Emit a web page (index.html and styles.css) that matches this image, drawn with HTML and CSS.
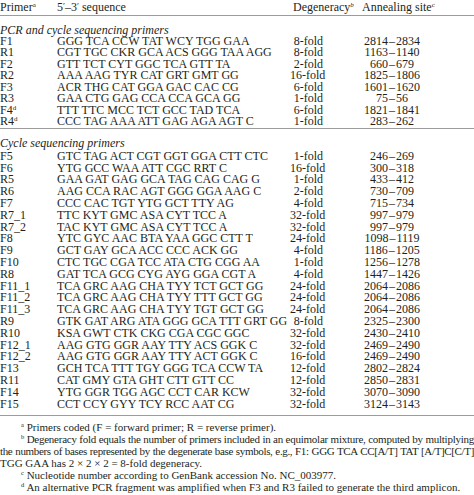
FILE: index.html
```html
<!DOCTYPE html>
<html>
<head>
<meta charset="utf-8">
<link rel="stylesheet" href="styles.css">
</head>
<body>
<div class="table">
  <div class="row head">
    <div>Primer<sup>a</sup></div>
    <div>5<sup class="pr">′</sup>–3<sup class="pr">′</sup> sequence</div>
    <div class="hdeg">Degeneracy<sup><i>b</i></sup></div>
    <div class="hann">Annealing site<sup>c</sup></div>
  </div>

  <div class="section s1">
    <div class="label">PCR and cycle sequencing primers</div>
    <div class="row"><div>F1</div><div>GGG TCA CCW TAT WCY TGG GAA</div><div class="deg">8-fold</div><div class="ann">2814 – 2834</div></div>
    <div class="row"><div>R1</div><div>CGT TGC CKR GCA ACS GGG TAA AGG</div><div class="deg">8-fold</div><div class="ann">1163 – 1140</div></div>
    <div class="row"><div>F2</div><div>GTT TCT CYT GGC TCA GTT TA</div><div class="deg">2-fold</div><div class="ann">660 – 679</div></div>
    <div class="row"><div>R2</div><div>AAA AAG TYR CAT GRT GMT GG</div><div class="deg">16-fold</div><div class="ann">1825 – 1806</div></div>
    <div class="row"><div>F3</div><div>ACR THG CAT GGA GAC CAC CG</div><div class="deg">6-fold</div><div class="ann">1601 – 1620</div></div>
    <div class="row"><div>R3</div><div>GAA CTG GAG CCA CCA GCA GG</div><div class="deg">1-fold</div><div class="ann">75 – 56</div></div>
    <div class="row"><div>F4<sup>d</sup></div><div>TTT TTC MCC TCT GCC TAD TCA</div><div class="deg">6-fold</div><div class="ann">1821 – 1841</div></div>
    <div class="row"><div>R4<sup>d</sup></div><div>CCC TAG AAA ATT GAG AGA AGT C</div><div class="deg">1-fold</div><div class="ann">283 – 262</div></div>
  </div>

  <div class="section s2">
    <div class="label">Cycle sequencing primers</div>
    <div class="row"><div>F5</div><div>GTC TAG ACT CGT GGT GGA CTT CTC</div><div class="deg">1-fold</div><div class="ann">246 – 269</div></div>
    <div class="row"><div>F6</div><div>YTG GCC WAA ATT CGC RRT C</div><div class="deg">16-fold</div><div class="ann">300 – 318</div></div>
    <div class="row"><div>R5</div><div>GAA GAT GAG GCA TAG CAG CAG G</div><div class="deg">1-fold</div><div class="ann">433 – 412</div></div>
    <div class="row"><div>R6</div><div>AAG CCA RAC AGT GGG GGA AAG C</div><div class="deg">2-fold</div><div class="ann">730 – 709</div></div>
    <div class="row"><div>F7</div><div>CCC CAC TGT YTG GCT TTY AG</div><div class="deg">4-fold</div><div class="ann">715 – 734</div></div>
    <div class="row"><div>R7_1</div><div>TTC KYT GMC ASA CYT TCC A</div><div class="deg">32-fold</div><div class="ann">997 – 979</div></div>
    <div class="row"><div>R7_2</div><div>TAC KYT GMC ASA CYT TCC A</div><div class="deg">32-fold</div><div class="ann">997 – 979</div></div>
    <div class="row"><div>F8</div><div>YTC GYC AAC BTA YAA GGC CTT T</div><div class="deg">24-fold</div><div class="ann">1098 – 1119</div></div>
    <div class="row"><div>F9</div><div>GCT GAY GCA ACC CCC ACK GG</div><div class="deg">4-fold</div><div class="ann">1186 – 1205</div></div>
    <div class="row"><div>F10</div><div>CTC TGC CGA TCC ATA CTG CGG AA</div><div class="deg">1-fold</div><div class="ann">1256 – 1278</div></div>
    <div class="row"><div>R8</div><div>GAT TCA GCG CYG AYG GGA CGT A</div><div class="deg">4-fold</div><div class="ann">1447 – 1426</div></div>
    <div class="row"><div>F11_1</div><div>TCA GRC AAG CHA TYY TCT GCT GG</div><div class="deg">24-fold</div><div class="ann">2064 – 2086</div></div>
    <div class="row"><div>F11_2</div><div>TCA GRC AAG CHA TYY TTT GCT GG</div><div class="deg">24-fold</div><div class="ann">2064 – 2086</div></div>
    <div class="row"><div>F11_3</div><div>TCA GRC AAG CHA TYY TGT GCT GG</div><div class="deg">24-fold</div><div class="ann">2064 – 2086</div></div>
    <div class="row"><div>R9</div><div>GTK GAT ARG ATA GGG GCA TTT GRT GG</div><div class="deg">8-fold</div><div class="ann">2325 – 2300</div></div>
    <div class="row"><div>R10</div><div>KSA GWT CTK CKG CGA CGC GGC</div><div class="deg">32-fold</div><div class="ann">2430 – 2410</div></div>
    <div class="row"><div>F12_1</div><div>AAG GTG GGR AAY TTY ACS GGK C</div><div class="deg">32-fold</div><div class="ann">2469 – 2490</div></div>
    <div class="row"><div>F12_2</div><div>AAG GTG GGR AAY TTY ACT GGK C</div><div class="deg">16-fold</div><div class="ann">2469 – 2490</div></div>
    <div class="row"><div>F13</div><div>GCH TCA TTT TGY GGG TCA CCW TA</div><div class="deg">12-fold</div><div class="ann">2802 – 2824</div></div>
    <div class="row"><div>R11</div><div>CAT GMY GTA GHT CTT GTT CC</div><div class="deg">12-fold</div><div class="ann">2850 – 2831</div></div>
    <div class="row"><div>F14</div><div>YTG GGR TGG AGC CCT CAR KCW</div><div class="deg">32-fold</div><div class="ann">3070 – 3090</div></div>
    <div class="row"><div>F15</div><div>CCT CCY GYY TCY RCC AAT CG</div><div class="deg">32-fold</div><div class="ann">3124 – 3143</div></div>
  </div>
</div>

<div class="notes">
  <p class="note"><sup>a</sup> Primers coded (F = forward primer; R = reverse primer).</p>
  <p class="note"><span class="full"><sup>b</sup> Degeneracy fold equals the number of primers included in an equimolar mixture, computed by multiplying</span><span class="full cont tight">the numbers of bases represented by the degenerate base symbols, e.g., F1: GGG TCA CC[A/T] TAT [A/T]C[C/T]</span><span class="cont">TGG GAA has 2 × 2 × 2 = 8-fold degeneracy.</span></p>
  <p class="note"><sup>c</sup> Nucleotide number according to GenBank accession No. NC_003977.</p>
  <p class="note"><sup>d</sup> An alternative PCR fragment was amplified when F3 and R3 failed to generate the third amplicon.</p>
</div>
</body>
</html>
```

FILE: styles.css
```css
html, body {
  margin: 0;
  padding: 0;
  background: #ffffff;
}

body {
  font-family: "Liberation Serif", "Times New Roman", serif;
  color: #231f20;
  width: 474px;
  overflow: hidden;
}

.table {
  font-size: 12px;
}

.row {
  display: grid;
  grid-template-columns: 57px 233px 72px 60px;
  height: 11.7px;
  line-height: 11.7px;
  white-space: nowrap;
}

sup {
  font-size: 7px;
  line-height: 0;
  vertical-align: 4px;
}

sup.pr {
  font-size: 9px;
  vertical-align: 2px;
}

.head {
  height: 14.5px;
  line-height: 14px;
  border-bottom: 1.5px solid #9c9c9c;
}

.hdeg {
  padding-left: 3px;
}

.hann {
  padding-left: 0;
}

.deg {
  text-align: right;
  padding-right: 39px;
}

.ann {
  text-align: center;
  word-spacing: -2px;
}

.section {
  border-bottom: 1.5px solid #9c9c9c;
}

.s1 {
  padding-top: 8px;
  padding-bottom: 0;
}

.s1 .row {
  height: 11.55px;
}

.s2 {
  padding-top: 8px;
  padding-bottom: 5px;
}

.s2 .row {
  height: 11.8px;
}

.label {
  font-style: italic;
  height: 12px;
  line-height: 12px;
}

.s2 .label {
  height: 14px;
}

.notes {
  font-size: 11px;
  padding-top: 4.5px;
}

.note {
  margin: 0;
  line-height: 12px;
  text-indent: 21px;
}

.note sup {
  font-size: 6.5px;
  vertical-align: 4px;
}

.full {
  display: block;
  text-align: justify;
  text-align-last: justify;
  white-space: nowrap;
  letter-spacing: -0.25px;
  word-spacing: -1px;
}

.cont {
  display: block;
  text-indent: 0;
}

.tight {
  word-spacing: -1.6px;
  letter-spacing: -0.35px;
}
```
